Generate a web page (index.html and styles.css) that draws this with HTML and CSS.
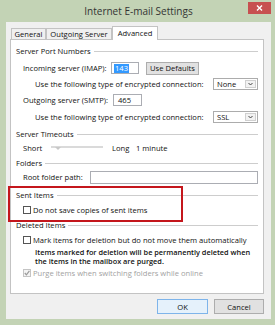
FILE: index.html
```html
<!DOCTYPE html>
<html lang="en">
<head>
    <meta charset="UTF-8">
    <title>Internet E-mail Settings</title>
    <link rel="stylesheet" href="styles.css">
</head>
<body>
    <div class="window">
        <div class="titlebar">
            <span></span>
            <span class="title">Internet E-mail Settings</span>
            <span class="close"><svg width="7" height="6" viewBox="0 0 7 6"><path d="M1 0.5 L6 5.5 M6 0.5 L1 5.5" stroke="#fff" stroke-width="1.4"/></svg></span>
        </div>
        <div class="client">
            <div class="tabs">
                <div class="tab t-gen">General</div>
                <div class="tab t-out">Outgoing Server</div>
                <div class="tab t-adv active">Advanced</div>
            </div>
            <div class="panel">
                <div class="group g-port"><span>Server Port Numbers</span></div>
                <div class="row r-in">
                    <span class="lbl w-in">Incoming server (IMAP):</span>
                    <span class="field f-in"><span class="hl">143</span></span>
                    <span class="btn b-def">Use Defaults</span>
                </div>
                <div class="row sub r-enc1">
                    <span>Use the following type of encrypted connection:</span>
                    <span class="combo"><span>None</span><span class="arrow"><svg width="5" height="4" viewBox="0 0 5 4"><path d="M0.5 1 L2.5 3 L4.5 1" fill="none" stroke="#444" stroke-width="1"/></svg></span></span>
                </div>
                <div class="row r-out">
                    <span class="lbl w-out">Outgoing server (SMTP):</span>
                    <span class="field f-out">465</span>
                </div>
                <div class="row sub r-enc2">
                    <span>Use the following type of encrypted connection:</span>
                    <span class="combo"><span>SSL</span><span class="arrow"><svg width="5" height="4" viewBox="0 0 5 4"><path d="M0.5 1 L2.5 3 L4.5 1" fill="none" stroke="#444" stroke-width="1"/></svg></span></span>
                </div>

                <div class="group g-time"><span>Server Timeouts</span></div>
                <div class="row r-slide">
                    <span class="lbl w-short">Short</span>
                    <span class="slider"><svg width="52" height="6" viewBox="0 0 52 6"><rect x="0" y="1" width="52" height="2" fill="#dadada"/><path d="M4 2 L10 2 L7 5 Z" fill="#c8c8c8"/></svg></span>
                    <span class="lbl w-long">Long</span>
                    <span>1 minute</span>
                </div>

                <div class="group g-fold"><span>Folders</span></div>
                <div class="row r-root">
                    <span class="lbl w-root">Root folder path:</span>
                    <span class="field f-root"></span>
                </div>

                <div class="group g-sent"><span>Sent Items</span></div>
                <div class="row r-nosave">
                    <span class="check"></span>
                    <span>Do not save copies of sent items</span>
                </div>

                <div class="group g-del"><span>Deleted Items</span></div>
                <div class="row r-mark">
                    <span class="check"></span>
                    <span>Mark items for deletion but do not move them automatically</span>
                </div>
                <p class="note">Items marked for deletion will be permanently deleted when<br>the items in the mailbox are purged.</p>
                <div class="row r-purge">
                    <span class="check off"><svg width="6" height="6" viewBox="0 0 6 6"><path d="M0.8 3 L2.4 4.8 L5.4 0.8" fill="none" stroke="#9a9a9a" stroke-width="1.2"/></svg></span>
                    <span>Purge items when switching folders while online</span>
                </div>
            </div>
            <div class="buttons">
                <span class="btn b-ok">OK</span>
                <span class="btn b-cancel">Cancel</span>
            </div>
        </div>
        <div class="annot"></div>
    </div>
</body>
</html>
```
FILE: styles.css
```css
/* dialog window, win8 style, scaled down */
body {margin: 0; font-family: "Open Sans", "Noto Sans", sans-serif; color: #111;}
.window {
    position: relative;
    width: 275px; height: 325px; box-sizing: border-box;
    background: #c3d3b5;
    padding: 0 4px 6px 6px;
    display: flex; flex-direction: column;
}

.titlebar {
    height: 22px; flex: none;
    display: grid; grid-template-columns: 23px 1fr 23px;
}
.title {text-align: center; font-size: 10px; line-height: 22px; color: #333;}
.close {
    margin-top: 2px; height: 12px;
    background: #c75050;
    display: flex; justify-content: center; align-items: center;
}

.client {
    flex: 1;
    background: #f0f0f0;
    padding: 4px 7px 0 4px;
    font-size: 7.6px;
}

/* tabs */
.tabs {display: flex; align-items: flex-end; height: 13px;}
.tab {
    box-sizing: border-box; height: 11px;
    border: 1px solid #c3c3c3; border-bottom: none;
    background: #f0f0f0;
    text-align: center; line-height: 10px;
}
.t-gen {width: 35px; margin-left: 1px;}
.t-out {width: 66px;}
.t-adv {width: 46px;}
.tab.active {
    height: 14px; margin-bottom: -1px;
    background: #fff; position: relative; z-index: 1;
    line-height: 12px;
}

.panel {
    box-sizing: border-box; height: 255px;
    background: #fff; border: 1px solid #c3c3c3;
    padding: 5px 5px 0 5px;
}

.row {display: flex; align-items: center; height: 12px; line-height: 12px; padding-left: 7px; white-space: nowrap;}
.row.sub {padding-left: 19px;}
.group {display: flex; align-items: center; height: 12px; line-height: 12px; gap: 3px; white-space: nowrap;}
.group::after {content: ""; flex: 1; height: 1px; background: #cdcdcd;}

.r-in {margin-top: 5px;}
.r-enc1 {margin-top: 4px;}
.r-out {margin-top: 4px;}
.r-enc2 {margin-top: 5px;}
.g-time {margin-top: 5px;}
.r-slide {margin-top: 2px;}
.g-fold {margin-top: 3px;}
.r-root {margin-top: 2px;}
.g-sent {margin-top: 6px;}
.r-nosave {margin-top: 3px;}
.g-del {margin-top: 3px;}
.r-mark {margin-top: 3px;}
.r-purge {margin-top: 1px; color: #a2a2a2;}

.lbl {flex: none;}
.w-in {width: 88px;}
.w-out {width: 90px;}
.w-short {width: 28px;}
.w-long {width: 24px;}
.w-root {width: 67px;}

.field {
    box-sizing: border-box; height: 12px;
    border: 1px solid #abadb3; background: #fff;
    line-height: 10px; padding-left: 2px;
}
.f-in {width: 28px;}
.f-out {width: 29px; padding-left: 4px;}
.f-root {flex: 1; height: 13px;}
.hl {background: #3399ff; color: #fff; padding: 0 1px; display: inline-block; line-height: 9px;}

.btn {
    box-sizing: border-box; display: flex; justify-content: center; align-items: center;
    border: 1px solid #adadad; background: #e1e1e1;
    height: 15px;
}
.b-def {width: 53px; height: 13px; margin-left: 7px;}

.combo {
    margin-left: auto; box-sizing: border-box;
    width: 45px; height: 12px;
    border: 1px solid #acacac; background: #fff;
    display: flex; align-items: center; justify-content: space-between;
    padding: 0 1px 0 3px;
}
.arrow {
    box-sizing: border-box; width: 11px; height: 8px;
    border: 1px solid #d0d0d0; background: #f2f2f2;
    display: flex; justify-content: center; align-items: center;
}

.slider {width: 52px; margin-right: 9px; display: flex; align-items: center;}

.check {
    box-sizing: border-box; width: 8px; height: 8px;
    border: 1px solid #555; background: #fff;
    margin-right: 2px; flex: none;
    display: flex; justify-content: center; align-items: center;
}
.check.off {border-color: #c4c4c4; background: #f4f4f4;}

.note {margin: 2px 0 0 19px; font-size: 7.35px; line-height: 9px; font-weight: 600; white-space: nowrap;}

.buttons {display: flex; justify-content: flex-end; gap: 6px; margin-top: 5px;}
.b-ok {width: 51px; border-color: #7eb4ea; background: #e5f1fb;}
.b-cancel {width: 50px;}

/* red highlight drawn over the dialog */
.annot {
    position: absolute; left: 8px; top: 186px;
    width: 175px; height: 36px; box-sizing: border-box;
    border: 2px solid #c4161c;
}
```
